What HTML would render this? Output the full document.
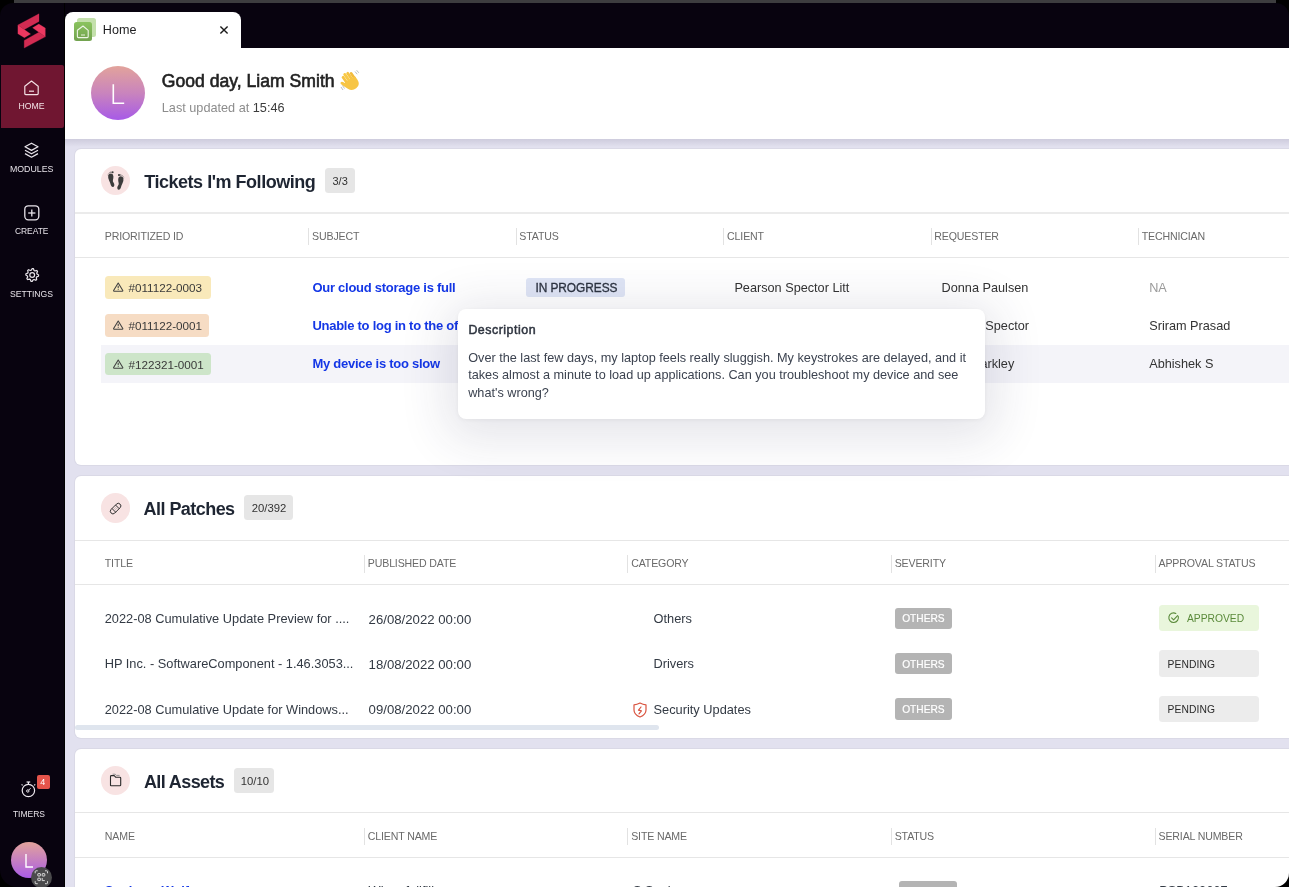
<!DOCTYPE html>
<html><head><meta charset="utf-8"><title>Home</title>
<style>
html,body{margin:0;padding:0;background:#000;width:1289px;height:887px;overflow:hidden;}
body{font-family:"Liberation Sans",sans-serif;position:relative;}
.app{position:absolute;left:0;top:0;width:1289px;height:887px;clip-path:inset(3px 0 0 0 round 13px 13px 14px 17px);overflow:hidden;background:#08030f;will-change:transform;}
.t{position:absolute;line-height:1;white-space:nowrap;}
.r{position:absolute;}
svg.r{overflow:visible;}
</style></head><body>
<div class="r" style="left:14px;top:0;width:1262px;height:3px;background:#3d3d3f;"></div>
<div class="app">

<div class="r" style="left:64px;top:3px;width:1px;height:884px;background:#000;border-radius:0px;"></div>
<svg class="r" style="left:0px;top:0px;" width="64" height="60" viewBox="0 0 64 60">
<polygon points="17.9,25 39,13.7 39,21.4 24.4,29.5" fill="#d22b52" stroke="#d22b52" stroke-width="0.25"/>
<polygon points="17.9,25 30.6,34 24.4,37.7 17.9,33.8" fill="#ec3860" stroke="#ec3860" stroke-width="0.25"/>
<polygon points="45.3,36.8 24.2,48.1 24.2,40.4 38.8,32.3" fill="#d22b52" stroke="#d22b52" stroke-width="0.25"/>
<polygon points="45.3,36.8 32.6,27.8 38.8,24.1 45.3,28" fill="#ec3860" stroke="#ec3860" stroke-width="0.25"/>
</svg>
<div class="r" style="left:1px;top:65px;width:63px;height:63px;background:#701631;border-radius:0px;border-radius:0 2px 2px 0;"></div>
<svg class="r" style="left:24px;top:80px;" width="16" height="16" viewBox="0 0 16 16"><path d="M7.5 1 L14.2 6.2 L14.2 13.6 Q14.2 14.6 13.2 14.6 L1.8 14.6 Q0.8 14.6 0.8 13.6 L0.8 6.2 Z" fill="none" stroke="#f3dfe4" stroke-width="1.2" stroke-linejoin="round"/><line x1="5" y1="11.2" x2="10" y2="11.2" stroke="#f3dfe4" stroke-width="1.2"/></svg>
<div class="t" style="left:18.5px;top:101.54px;font-size:8.7px;color:#f3e3e7;font-weight:400;">HOME</div>
<svg class="r" style="left:24px;top:142px;" width="16" height="16" viewBox="0 0 16 16"><path d="M7.5 1.2 L14 4.8 L7.5 8.4 L1 4.8 Z" fill="none" stroke="#e8e4ea" stroke-width="1.3" stroke-linejoin="round"/><path d="M1 8.2 L7.5 11.8 L14 8.2" fill="none" stroke="#e8e4ea" stroke-width="1.3" stroke-linejoin="round"/><path d="M1 11.6 L7.5 15.2 L14 11.6" fill="none" stroke="#e8e4ea" stroke-width="1.3" stroke-linejoin="round"/></svg>
<div class="t" style="left:9.9px;top:164.55px;font-size:8.8px;color:#e6e2e8;font-weight:400;">MODULES</div>
<svg class="r" style="left:24px;top:205px;" width="16" height="16" viewBox="0 0 16 16"><rect x="0.8" y="0.8" width="14" height="14" rx="3.5" fill="none" stroke="#e8e4ea" stroke-width="1.3"/><line x1="7.8" y1="4.4" x2="7.8" y2="11.6" stroke="#e8e4ea" stroke-width="1.3"/><line x1="4.2" y1="8" x2="11.4" y2="8" stroke="#e8e4ea" stroke-width="1.3"/></svg>
<div class="t" style="left:14.9px;top:227.05px;font-size:8.45px;color:#e6e2e8;font-weight:400;">CREATE</div>
<svg class="r" style="left:24.5px;top:268.3px;" width="15" height="15" viewBox="0 0 15 15"><path d="M7.20 0.60 L8.45 0.72 L9.08 2.47 L9.92 2.93 L11.73 2.47 L12.52 3.44 L11.73 5.12 L12.01 6.04 L13.60 7.00 L13.48 8.25 L11.73 8.88 L11.27 9.72 L11.73 11.53 L10.76 12.32 L9.08 11.53 L8.16 11.81 L7.20 13.40 L5.95 13.28 L5.32 11.53 L4.48 11.07 L2.67 11.53 L1.88 10.56 L2.67 8.88 L2.39 7.96 L0.80 7.00 L0.92 5.75 L2.67 5.12 L3.13 4.28 L2.67 2.47 L3.64 1.68 L5.32 2.47 L6.24 2.19 Z" fill="none" stroke="#e8e4ea" stroke-width="1.2" stroke-linejoin="round"/><circle cx="7.2" cy="7.0" r="2.4" fill="none" stroke="#e8e4ea" stroke-width="1.2"/></svg>
<div class="t" style="left:9.9px;top:289.58px;font-size:8.65px;color:#e6e2e8;font-weight:400;">SETTINGS</div>
<svg class="r" style="left:20px;top:778px;" width="18" height="22" viewBox="0 0 18 22"><circle cx="8.4" cy="12.5" r="6.2" fill="none" stroke="#ece8ee" stroke-width="1.2"/><line x1="8.4" y1="6.3" x2="8.4" y2="4" stroke="#ece8ee" stroke-width="1.2"/><line x1="6.6" y1="4" x2="10.2" y2="4" stroke="#ece8ee" stroke-width="1.2"/><line x1="2.6" y1="7.4" x2="1.6" y2="6.4" stroke="#ece8ee" stroke-width="1.2"/><line x1="14.2" y1="7.4" x2="15.2" y2="6.4" stroke="#ece8ee" stroke-width="1.2"/><circle cx="7.8" cy="13" r="1.2" fill="none" stroke="#ece8ee" stroke-width="1"/><line x1="8.6" y1="12.2" x2="10.6" y2="10.2" stroke="#ece8ee" stroke-width="1"/></svg>
<div class="r" style="left:36.5px;top:775px;width:13.5px;height:14px;background:#e5544b;border-radius:2px;"></div>
<div class="t" style="left:40.3px;top:778.38px;font-size:9px;color:#fff;font-weight:400;">4</div>
<div class="t" style="left:12.9px;top:810.20px;font-size:8.5px;color:#e6e2e8;font-weight:400;">TIMERS</div>
<div class="r" style="left:11px;top:842px;width:36px;height:36px;border-radius:50%;background:linear-gradient(#e2a39b,#a95ce6);"></div>
<svg class="r" style="left:11px;top:842px;" width="36" height="36" viewBox="0 0 36 36"><path d="M15 12 L15 25 L22 25" fill="none" stroke="#fff" stroke-width="1.4"/></svg>
<div class="r" style="left:31px;top:866.5px;width:21px;height:21px;border-radius:50%;background:#4a4a4c;"></div>
<svg class="r" style="left:31px;top:866.5px;" width="21" height="21" viewBox="0 0 21 21"><g fill="none" stroke="#e8e8e8" stroke-width="0.9">
<path d="M4.2 6.3 V4.6 Q4.2 3.8 5 3.8 H6.7"/><path d="M14 3.8 H15.7 Q16.5 3.8 16.5 4.6 V6.3"/><path d="M16.5 14.2 V15.9 Q16.5 16.7 15.7 16.7 H14"/><path d="M6.7 16.7 H5 Q4.2 16.7 4.2 15.9 V14.2"/>
<rect x="6.8" y="6.6" width="2.6" height="2.4" rx="0.4"/><rect x="11.2" y="6.6" width="2.6" height="2.4" rx="0.4"/><rect x="6.8" y="11.2" width="2.6" height="2.4" rx="0.4"/><path d="M11.2 11 V13.6 H13.8"/></g></svg>
<div class="r" style="left:65px;top:12px;width:176px;height:40px;background:#fff;border-radius:8px 8px 0 0;"></div>
<div class="r" style="left:77.4px;top:18.2px;width:18.5px;height:18.8px;background:#c4e0ac;border-radius:2.5px;"></div>
<div class="r" style="left:73.7px;top:21.9px;width:18.3px;height:19.1px;border-radius:2.5px;background:linear-gradient(#8ac35e,#72a24f);"></div>
<svg class="r" style="left:73.7px;top:21.9px;" width="19" height="19" viewBox="0 0 19 19"><path d="M9 4 L14.2 8.3 L14.2 14.6 Q14.2 15.6 13.2 15.6 L4.4 15.6 Q3.4 15.6 3.4 14.6 L3.4 8.3 Z" fill="none" stroke="#eef5e6" stroke-width="1.1" stroke-linejoin="round"/><line x1="7" y1="13" x2="11" y2="13" stroke="#cfe3bd" stroke-width="1.3"/></svg>
<div class="t" style="left:102.8px;top:24.13px;font-size:12.6px;color:#1d1d1f;font-weight:400;">Home</div>
<svg class="r" style="left:219.5px;top:26px;" width="8" height="8" viewBox="0 0 8 8"><path d="M0.4 0.4 L7.6 7.6 M7.6 0.4 L0.4 7.6" stroke="#1a1a1a" stroke-width="1.4"/></svg>
<div class="r" style="left:65px;top:48px;width:1224px;height:91px;background:#fff;border-radius:0px;"></div>
<div class="r" style="left:91px;top:66px;width:54px;height:54px;border-radius:50%;background:linear-gradient(#e2a39b,#c984bd 50%,#a75ae7);"></div>
<svg class="r" style="left:91px;top:66px;" width="54" height="54" viewBox="0 0 54 54"><path d="M22.3 18.2 L22.3 37.3 L33.2 37.3" fill="none" stroke="#fff" stroke-width="1.6"/></svg>
<div class="t" style="left:161.8px;top:73.20px;font-size:17.6px;color:#222;font-weight:400;-webkit-text-stroke:0.6px #222;">Good day, Liam Smith</div>
<svg class="r" style="left:340px;top:69px;" width="22" height="22" viewBox="0 0 22 22">
<g transform="rotate(-35 11 12)">
<rect x="5.2" y="3" width="2.8" height="10" rx="1.4" fill="#f6c343"/>
<rect x="8.2" y="1.6" width="2.9" height="11" rx="1.45" fill="#f8c946"/>
<rect x="11.3" y="2.4" width="2.8" height="10.5" rx="1.4" fill="#f6c343"/>
<rect x="14.2" y="4.4" width="2.6" height="9" rx="1.3" fill="#f2bb3c"/>
<path d="M4.6 10 Q3.5 6.8 1.6 7.2 Q0.3 7.8 1.4 10.6 L4 16.5 Q6 21 11 21 Q16.8 21 17 14.5 L17 10 L5 10 Z" fill="#f7c545"/>
</g>
<path d="M2.5 16.5 L4.5 19.5 M1 18 L3 21" stroke="#a8b0b8" stroke-width="0.8"/>
<path d="M15 2.5 L17.2 5.2 M16.6 1.2 L18.8 3.8" stroke="#a8b0b8" stroke-width="0.8"/>
</svg>
<div class="t" style="left:161.8px;top:101.55px;font-size:12.7px;color:#8c8c8c;font-weight:400;">Last updated at <span style="color:#3c3c3c">15:46</span></div>
<div class="r" style="left:65px;top:139px;width:1224px;height:748px;background:#e2e1ef;"></div><div class="r" style="left:65px;top:139px;width:1224px;height:9px;background:linear-gradient(rgba(70,65,100,0.13),rgba(70,65,100,0) 8px);"></div>
<div class="r" style="left:74.5px;top:149px;width:1230px;height:316px;background:#fff;border-radius:6px;box-shadow:0 0 0 1px rgba(0,0,0,0.035);"></div>
<div class="r" style="left:101px;top:165.9px;width:29.2px;height:29.2px;border-radius:50%;background:#f8e3e3;"></div>
<svg class="r" style="left:105px;top:170px;" width="22" height="22" viewBox="0 0 22 22"><defs><g id="ft">
<path d="M3.2 5.2 Q3.8 3.6 6 3.5 Q8.3 3.6 8.4 6.2 Q8.5 8.6 7.9 10.4 Q7.7 11.6 8.5 12.6 Q9.6 14 9.3 15.4 Q8.9 17 7.6 16.9 Q6.2 16.7 5.8 15 Q5.2 12.6 4.2 10.8 Q2.8 8.2 3.2 5.2 Z"/>
<circle cx="7.6" cy="2.3" r="1.05"/><circle cx="5.9" cy="2.2" r="0.7" opacity="0.75"/><circle cx="4.5" cy="2.8" r="0.6" opacity="0.6"/><circle cx="3.4" cy="3.7" r="0.5" opacity="0.5"/><circle cx="2.7" cy="4.9" r="0.45" opacity="0.45"/>
</g></defs><g fill="#3c3c3c"><use href="#ft"/><use href="#ft" transform="translate(21.6 2.8) scale(-1 1)"/></g></svg>
<div class="t" style="left:144.2px;top:172.86px;font-size:18px;color:#1e2532;font-weight:700;letter-spacing:-0.47px;">Tickets I'm Following</div>
<div class="r" style="left:325.4px;top:168.4px;width:30px;height:24.7px;background:#e6e6e6;border-radius:3.5px;"></div>
<div class="t" style="left:332.5px;top:176.09px;font-size:11px;color:#333;font-weight:400;">3/3</div>
<div class="r" style="left:75px;top:212px;width:1214px;height:2px;background:#ebebeb;border-radius:0px;"></div>
<div class="r" style="left:75px;top:256.8px;width:1214px;height:1px;background:#e6e6e6;border-radius:0px;"></div>
<div class="t" style="left:104.8px;top:231.13px;font-size:10.6px;color:#6a6a6a;font-weight:400;letter-spacing:-0.15px;">PRIORITIZED ID</div>
<div class="r" style="left:308.3px;top:227.5px;width:1px;height:17.5px;background:#e2e2e2;border-radius:0px;"></div>
<div class="t" style="left:312.1px;top:231.13px;font-size:10.6px;color:#6a6a6a;font-weight:400;letter-spacing:-0.15px;">SUBJECT</div>
<div class="r" style="left:515.5px;top:227.5px;width:1px;height:17.5px;background:#e2e2e2;border-radius:0px;"></div>
<div class="t" style="left:519.3px;top:231.13px;font-size:10.6px;color:#6a6a6a;font-weight:400;letter-spacing:-0.15px;">STATUS</div>
<div class="r" style="left:723.3px;top:227.5px;width:1px;height:17.5px;background:#e2e2e2;border-radius:0px;"></div>
<div class="t" style="left:727.0999999999999px;top:231.13px;font-size:10.6px;color:#6a6a6a;font-weight:400;letter-spacing:-0.15px;">CLIENT</div>
<div class="r" style="left:930.5px;top:227.5px;width:1px;height:17.5px;background:#e2e2e2;border-radius:0px;"></div>
<div class="t" style="left:934.3px;top:231.13px;font-size:10.6px;color:#6a6a6a;font-weight:400;letter-spacing:-0.15px;">REQUESTER</div>
<div class="r" style="left:1138px;top:227.5px;width:1px;height:17.5px;background:#e2e2e2;border-radius:0px;"></div>
<div class="t" style="left:1141.8px;top:231.13px;font-size:10.6px;color:#6a6a6a;font-weight:400;letter-spacing:-0.15px;">TECHNICIAN</div>
<div class="r" style="left:101px;top:345px;width:1188px;height:38px;background:#f4f4f9;border-radius:0px;"></div>
<div class="r" style="left:104.5px;top:276px;width:106.6px;height:22.6px;background:#f9e9ba;border-radius:3.5px;"></div>
<svg class="r" style="left:113.3px;top:282px;" width="11" height="10" viewBox="0 0 11 10"><path d="M5.2 1 L9.8 8.6 Q10 9.2 9.4 9.2 L1 9.2 Q0.4 9.2 0.6 8.6 Z" fill="none" stroke="#404040" stroke-width="1.05" stroke-linejoin="round"/><line x1="5.2" y1="3.8" x2="5.2" y2="6.3" stroke="#404040" stroke-width="1.05"/><circle cx="5.2" cy="7.6" r="0.5" fill="#404040"/></svg>
<div class="t" style="left:128.4px;top:282.00px;font-size:11.7px;color:#3a3a3a;font-weight:400;">#011122-0003</div>
<div class="r" style="left:104.5px;top:314.4px;width:104.5px;height:22.6px;background:#f6dcc4;border-radius:3.5px;"></div>
<svg class="r" style="left:113.3px;top:320.4px;" width="11" height="10" viewBox="0 0 11 10"><path d="M5.2 1 L9.8 8.6 Q10 9.2 9.4 9.2 L1 9.2 Q0.4 9.2 0.6 8.6 Z" fill="none" stroke="#404040" stroke-width="1.05" stroke-linejoin="round"/><line x1="5.2" y1="3.8" x2="5.2" y2="6.3" stroke="#404040" stroke-width="1.05"/><circle cx="5.2" cy="7.6" r="0.5" fill="#404040"/></svg>
<div class="t" style="left:128.4px;top:320.40px;font-size:11.7px;color:#3a3a3a;font-weight:400;">#011122-0001</div>
<div class="r" style="left:104.5px;top:352.5px;width:106.5px;height:22.6px;background:#cde5c9;border-radius:3.5px;"></div>
<svg class="r" style="left:113.3px;top:358.5px;" width="11" height="10" viewBox="0 0 11 10"><path d="M5.2 1 L9.8 8.6 Q10 9.2 9.4 9.2 L1 9.2 Q0.4 9.2 0.6 8.6 Z" fill="none" stroke="#404040" stroke-width="1.05" stroke-linejoin="round"/><line x1="5.2" y1="3.8" x2="5.2" y2="6.3" stroke="#404040" stroke-width="1.05"/><circle cx="5.2" cy="7.6" r="0.5" fill="#404040"/></svg>
<div class="t" style="left:128.4px;top:358.50px;font-size:11.7px;color:#3a3a3a;font-weight:400;">#122321-0001</div>
<div class="t" style="left:312.4px;top:281.30px;font-size:13px;color:#1437e6;font-weight:700;letter-spacing:-0.26px;">Our cloud storage is full</div>
<div class="t" style="left:312.4px;top:319.30px;font-size:13px;color:#1437e6;font-weight:700;letter-spacing:-0.26px;">Unable to log in to the office network</div>
<div class="t" style="left:312.4px;top:357.30px;font-size:13px;color:#1437e6;font-weight:700;letter-spacing:-0.26px;">My device is too slow</div>
<div class="r" style="left:526.4px;top:277.6px;width:98.6px;height:19.6px;background:#dfe5f5;border-radius:3px;"></div>
<div class="t" style="left:535.4px;top:282.53px;font-size:11.9px;color:#2c3340;font-weight:400;letter-spacing:-0.05px;-webkit-text-stroke:0.3px #2c3340;">IN PROGRESS</div>
<div class="t" style="left:734.4px;top:281.85px;font-size:12.7px;color:#333;font-weight:400;">Pearson Spector Litt</div>
<div class="t" style="left:941.6px;top:281.85px;font-size:12.7px;color:#333;font-weight:400;">Donna Paulsen</div>
<div class="t" style="left:1149.2px;top:281.85px;font-size:12.7px;color:#9a9a9a;font-weight:400;">NA</div>
<div class="t" style="left:941.6px;top:319.85px;font-size:12.7px;color:#333;font-weight:400;">Harvey Spector</div>
<div class="t" style="left:1149.2px;top:319.85px;font-size:12.7px;color:#333;font-weight:400;">Sriram Prasad</div>
<div class="t" style="left:941.6px;top:357.85px;font-size:12.7px;color:#333;font-weight:400;">Nate Barkley</div>
<div class="t" style="left:1149.2px;top:357.85px;font-size:12.7px;color:#333;font-weight:400;">Abhishek S</div>
<div class="r" style="left:74.5px;top:476px;width:1230px;height:262px;background:#fff;border-radius:6px;box-shadow:0 0 0 1px rgba(0,0,0,0.035);"></div>
<div class="r" style="left:101px;top:493.4px;width:29.2px;height:29.2px;border-radius:50%;background:#f8e3e3;"></div>
<svg class="r" style="left:108px;top:500px;" width="16" height="16" viewBox="0 0 16 16"><g transform="translate(0.6 0.6) rotate(-45 7.9 8) scale(0.92)"><rect x="1" y="5.2" width="13.8" height="5.6" rx="2.8" fill="none" stroke="#2a2a2a" stroke-width="1"/><line x1="5.2" y1="5.2" x2="5.2" y2="10.8" stroke="#2a2a2a" stroke-width="1"/><line x1="10.6" y1="5.2" x2="10.6" y2="10.8" stroke="#2a2a2a" stroke-width="1"/><g fill="#666"><circle cx="7" cy="7" r="0.35"/><circle cx="8.8" cy="7" r="0.35"/><circle cx="7" cy="9" r="0.35"/><circle cx="8.8" cy="9" r="0.35"/></g></g></svg>
<div class="t" style="left:143.6px;top:499.96px;font-size:18px;color:#1e2532;font-weight:700;letter-spacing:-0.55px;">All Patches</div>
<div class="r" style="left:244.2px;top:495.3px;width:49.1px;height:25px;background:#e6e6e6;border-radius:3.5px;"></div>
<div class="t" style="left:251.7px;top:502.83px;font-size:11.3px;color:#333;font-weight:400;">20/392</div>
<div class="r" style="left:75px;top:540px;width:1214px;height:1px;background:#e6e6e6;border-radius:0px;"></div>
<div class="r" style="left:75px;top:584px;width:1214px;height:1px;background:#e6e6e6;border-radius:0px;"></div>
<div class="t" style="left:104.8px;top:558.33px;font-size:10.6px;color:#6a6a6a;font-weight:400;letter-spacing:-0.15px;">TITLE</div>
<div class="r" style="left:364px;top:555px;width:1px;height:17.5px;background:#e2e2e2;border-radius:0px;"></div>
<div class="t" style="left:367.8px;top:558.33px;font-size:10.6px;color:#6a6a6a;font-weight:400;letter-spacing:-0.15px;">PUBLISHED DATE</div>
<div class="r" style="left:627.4px;top:555px;width:1px;height:17.5px;background:#e2e2e2;border-radius:0px;"></div>
<div class="t" style="left:631.1999999999999px;top:558.33px;font-size:10.6px;color:#6a6a6a;font-weight:400;letter-spacing:-0.15px;">CATEGORY</div>
<div class="r" style="left:890.9px;top:555px;width:1px;height:17.5px;background:#e2e2e2;border-radius:0px;"></div>
<div class="t" style="left:894.6999999999999px;top:558.33px;font-size:10.6px;color:#6a6a6a;font-weight:400;letter-spacing:-0.15px;">SEVERITY</div>
<div class="r" style="left:1154.7px;top:555px;width:1px;height:17.5px;background:#e2e2e2;border-radius:0px;"></div>
<div class="t" style="left:1158.5px;top:558.33px;font-size:10.6px;color:#6a6a6a;font-weight:400;letter-spacing:-0.15px;">APPROVAL STATUS</div>
<div class="t" style="left:104.7px;top:612.86px;font-size:12.8px;color:#333a44;font-weight:400;">2022-08 Cumulative Update Preview for ....</div>
<div class="t" style="left:368.6px;top:612.53px;font-size:13.2px;color:#333a44;font-weight:400;">26/08/2022 00:00</div>
<div class="t" style="left:653.5px;top:612.86px;font-size:12.8px;color:#333a44;font-weight:400;">Others</div>
<div class="r" style="left:895.1px;top:607.5px;width:56.7px;height:21.4px;background:#b4b4b4;border-radius:3px;"></div>
<div class="t" style="left:902.2px;top:614.17px;font-size:10.2px;color:#fff;font-weight:400;-webkit-text-stroke:0.2px #fff;">OTHERS</div>
<div class="r" style="left:1158.5px;top:604.7px;width:100.5px;height:26.6px;background:#e9f6dc;border-radius:3.5px;"></div>
<svg class="r" style="left:1167.5px;top:612.2px;" width="12" height="12" viewBox="0 0 12 12"><path d="M10.2 4.2 A4.8 4.8 0 1 1 7.8 1.4" fill="none" stroke="#5b8b3b" stroke-width="1.1" stroke-linecap="round"/><path d="M3.6 5.8 L5.6 7.8 L9.6 3.6" fill="none" stroke="#5b8b3b" stroke-width="1.1" stroke-linecap="round" stroke-linejoin="round"/></svg>
<div class="t" style="left:1186.9px;top:614.08px;font-size:10.3px;color:#5b8b3b;font-weight:400;">APPROVED</div>
<div class="t" style="left:104.7px;top:658.36px;font-size:12.8px;color:#333a44;font-weight:400;">HP Inc. - SoftwareComponent - 1.46.3053...</div>
<div class="t" style="left:368.6px;top:658.03px;font-size:13.2px;color:#333a44;font-weight:400;">18/08/2022 00:00</div>
<div class="t" style="left:653.5px;top:658.36px;font-size:12.8px;color:#333a44;font-weight:400;">Drivers</div>
<div class="r" style="left:895.1px;top:653.0px;width:56.7px;height:21.4px;background:#b4b4b4;border-radius:3px;"></div>
<div class="t" style="left:902.2px;top:659.67px;font-size:10.2px;color:#fff;font-weight:400;-webkit-text-stroke:0.2px #fff;">OTHERS</div>
<div class="r" style="left:1158.5px;top:650.2px;width:100.5px;height:26.8px;background:#ececec;border-radius:3.5px;"></div>
<div class="t" style="left:1167.5px;top:659.58px;font-size:10.3px;color:#2a2a2a;font-weight:400;letter-spacing:0.1px;">PENDING</div>
<div class="t" style="left:104.7px;top:703.66px;font-size:12.8px;color:#333a44;font-weight:400;">2022-08 Cumulative Update for Windows...</div>
<div class="t" style="left:368.6px;top:703.33px;font-size:13.2px;color:#333a44;font-weight:400;">09/08/2022 00:00</div>
<div class="t" style="left:653.5px;top:703.66px;font-size:12.8px;color:#333a44;font-weight:400;">Security Updates</div>
<div class="r" style="left:895.1px;top:698.3px;width:56.7px;height:21.4px;background:#b4b4b4;border-radius:3px;"></div>
<div class="t" style="left:902.2px;top:704.97px;font-size:10.2px;color:#fff;font-weight:400;-webkit-text-stroke:0.2px #fff;">OTHERS</div>
<div class="r" style="left:1158.5px;top:695.5px;width:100.5px;height:26.8px;background:#ececec;border-radius:3.5px;"></div>
<div class="t" style="left:1167.5px;top:704.88px;font-size:10.3px;color:#2a2a2a;font-weight:400;letter-spacing:0.1px;">PENDING</div>
<svg class="r" style="left:633px;top:701.5px;" width="15" height="16" viewBox="0 0 15 16"><path d="M7 1 Q10 2.6 13 2.8 L13 8 Q13 12.6 7 15 Q1 12.6 1 8 L1 2.8 Q4 2.6 7 1 Z" fill="none" stroke="#d9533f" stroke-width="1.2" stroke-linejoin="round"/><path d="M8 5 L5.5 8.2 L8.4 8.8 L6 11.8" fill="none" stroke="#d9533f" stroke-width="1.2" stroke-linecap="round" stroke-linejoin="round"/></svg>
<div class="r" style="left:75px;top:725px;width:584px;height:5px;background:#dfe5ee;border-radius:2.5px;"></div>
<div class="r" style="left:74.5px;top:749px;width:1230px;height:160px;background:#fff;border-radius:6px;box-shadow:0 0 0 1px rgba(0,0,0,0.035);"></div>
<div class="r" style="left:101px;top:765.6px;width:29.2px;height:29.2px;border-radius:50%;background:#f8e3e3;"></div>
<svg class="r" style="left:109px;top:773px;" width="13" height="14" viewBox="0 0 13 14"><path d="M1.5 12.5 L1.5 3.5 Q1.5 2.6 2.4 2.6 L5.2 2.6 L6.6 4.2 L10.8 4.2 Q11.7 4.2 11.7 5.1 L11.7 12 Q11.7 12.8 10.9 12.8 L2.2 12.8 Z" fill="none" stroke="#2a2a2a" stroke-width="1.1" stroke-linejoin="round"/><path d="M3.6 1.2 L6.2 1.2 L7.4 2.4 L10.6 2.4" fill="none" stroke="#888" stroke-width="0.9"/></svg>
<div class="t" style="left:143.9px;top:772.56px;font-size:18px;color:#1e2532;font-weight:700;letter-spacing:-0.6px;">All Assets</div>
<div class="r" style="left:233.9px;top:768.2px;width:39.8px;height:24.5px;background:#e6e6e6;border-radius:3.5px;"></div>
<div class="t" style="left:240.8px;top:775.63px;font-size:11.3px;color:#333;font-weight:400;">10/10</div>
<div class="r" style="left:75px;top:812px;width:1214px;height:1px;background:#e6e6e6;border-radius:0px;"></div>
<div class="r" style="left:75px;top:856.6px;width:1214px;height:1px;background:#e6e6e6;border-radius:0px;"></div>
<div class="t" style="left:104.8px;top:830.93px;font-size:10.6px;color:#6a6a6a;font-weight:400;letter-spacing:-0.15px;">NAME</div>
<div class="r" style="left:364px;top:827.5px;width:1px;height:17.5px;background:#e2e2e2;border-radius:0px;"></div>
<div class="t" style="left:367.8px;top:830.93px;font-size:10.6px;color:#6a6a6a;font-weight:400;letter-spacing:-0.15px;">CLIENT NAME</div>
<div class="r" style="left:627.4px;top:827.5px;width:1px;height:17.5px;background:#e2e2e2;border-radius:0px;"></div>
<div class="t" style="left:631.1999999999999px;top:830.93px;font-size:10.6px;color:#6a6a6a;font-weight:400;letter-spacing:-0.15px;">SITE NAME</div>
<div class="r" style="left:890.9px;top:827.5px;width:1px;height:17.5px;background:#e2e2e2;border-radius:0px;"></div>
<div class="t" style="left:894.6999999999999px;top:830.93px;font-size:10.6px;color:#6a6a6a;font-weight:400;letter-spacing:-0.15px;">STATUS</div>
<div class="r" style="left:1154.7px;top:827.5px;width:1px;height:17.5px;background:#e2e2e2;border-radius:0px;"></div>
<div class="t" style="left:1158.5px;top:830.93px;font-size:10.6px;color:#6a6a6a;font-weight:400;letter-spacing:-0.15px;">SERIAL NUMBER</div>
<div class="t" style="left:104.7px;top:885.16px;font-size:12.8px;color:#1437e6;font-weight:700;">Spokane Wolf</div>
<div class="t" style="left:368.6px;top:885.16px;font-size:12.8px;color:#333a44;font-weight:400;">Whoa fullfill</div>
<div class="t" style="left:633px;top:885.16px;font-size:12.8px;color:#333a44;font-weight:400;">S.Spokane</div>
<div class="r" style="left:899px;top:881px;width:58px;height:22px;background:#b4b4b4;border-radius:3px;"></div>
<div class="t" style="left:1159.2px;top:884.76px;font-size:12.8px;color:#333a44;font-weight:400;">PSB123667</div>
<div class="r" style="left:457.7px;top:309px;width:527px;height:109.5px;background:#fff;border-radius:8px;box-shadow:0 8px 48px 12px rgba(40,40,80,0.12), 0 1px 4px rgba(0,0,0,0.05);"></div>
<div class="t" style="left:468.4px;top:323.70px;font-size:12.4px;color:#2f3540;font-weight:400;letter-spacing:0.52px;-webkit-text-stroke:0.5px #2f3540;">Description</div>
<div class="t" style="left:468.2px;top:351.85px;font-size:12.7px;color:#3c4350;font-weight:400;">Over the last few days, my laptop feels really sluggish. My keystrokes are delayed, and it</div>
<div class="t" style="left:468.2px;top:369.45px;font-size:12.7px;color:#3c4350;font-weight:400;">takes almost a minute to load up applications. Can you troubleshoot my device and see</div>
<div class="t" style="left:468.2px;top:386.95px;font-size:12.7px;color:#3c4350;font-weight:400;">what's wrong?</div>
</div></body></html>
